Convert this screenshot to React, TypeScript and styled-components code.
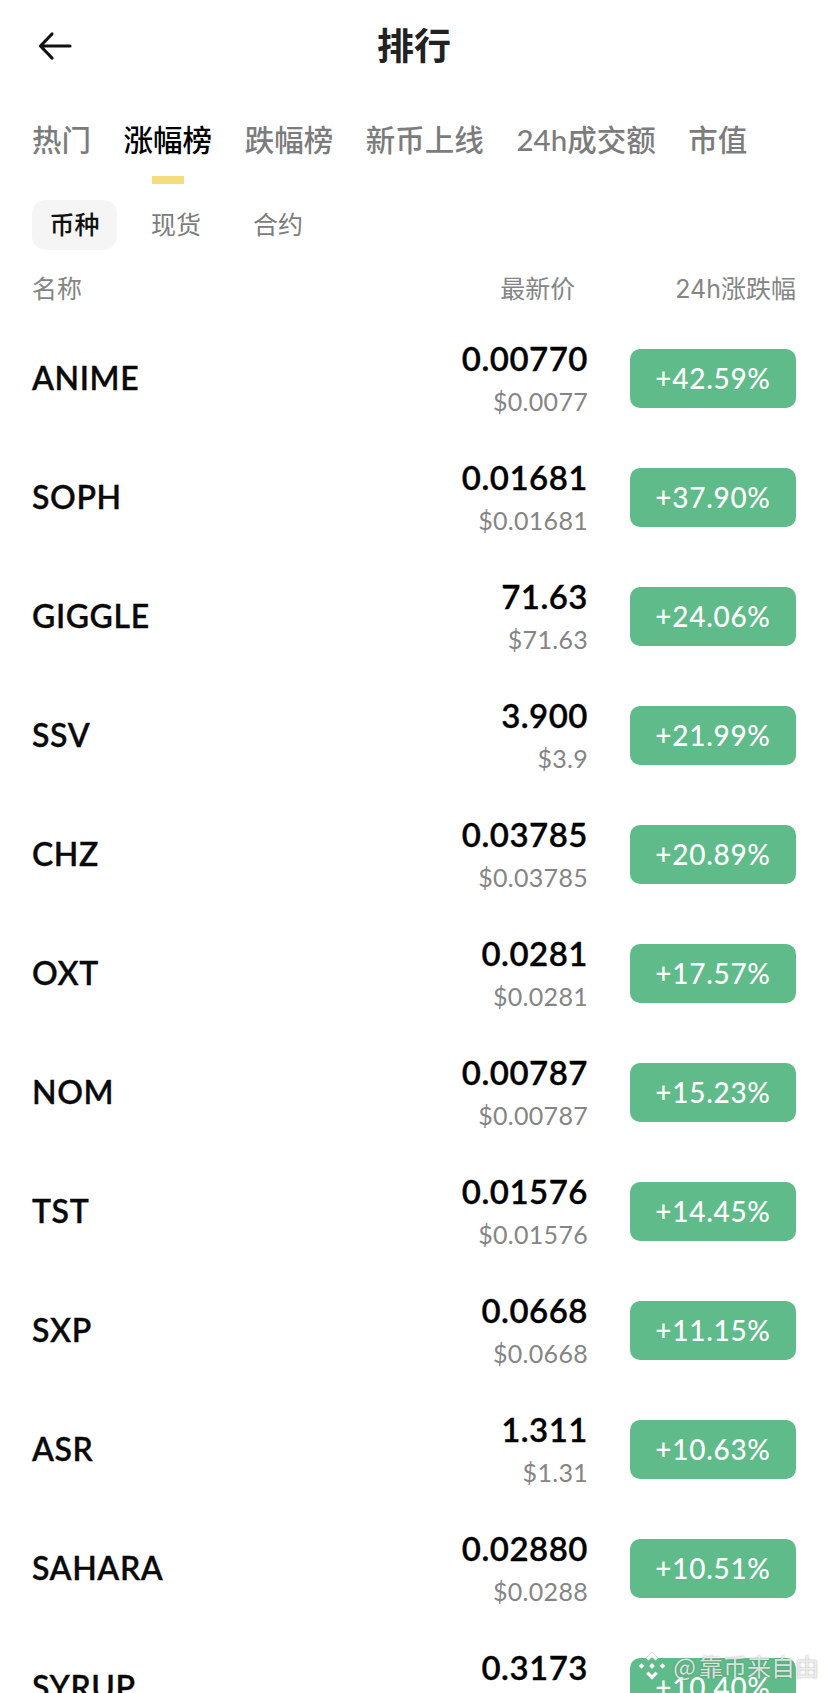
import React from "react";
import styled, { createGlobalStyle } from "styled-components";

const GlobalStyle = createGlobalStyle`
	html, body {
		margin: 0;
		padding: 0;
		background: #ffffff;
	}
	body {
		font-family: "Lato", "Noto Sans CJK SC", sans-serif;
	}
`;

const Page = styled.div`
	position: relative;
	width: 828px;
	height: 1693px;
	overflow: hidden;
	background: #ffffff;
`;

const Header = styled.header`
	height: 92px;
	display: flex;
	align-items: center;
	justify-content: center;
	position: relative;
`;

const BackButton = styled.button`
	position: absolute;
	left: 37px;
	top: 30px;
	width: 36px;
	height: 32px;
	padding: 0;
	border: none;
	background: none;
	display: flex;
`;

const Title = styled.h1`
	margin: -4px 0 0;
	font-family: "Noto Sans CJK SC", sans-serif;
	font-size: 37px;
	font-weight: 700;
	line-height: 92px;
	color: #222222;
`;

const Tabs = styled.nav`
	display: flex;
	height: 92px;
	padding: 26px 0 0 32px;
	box-sizing: border-box;
	gap: 32.6px;
`;

const Tab = styled.div<{ $active?: boolean }>`
	position: relative;
	font-family: "Lato", "Noto Sans CJK SC", sans-serif;
	font-size: 29.5px;
	line-height: 44px;
	height: 44px;
	font-weight: 500;
	white-space: nowrap;
	color: ${(p) => (p.$active ? "#000000" : "#7c7c7c")};

	${(p) =>
		p.$active &&
		`&::after {
			content: "";
			position: absolute;
			left: 28px;
			top: 58px;
			width: 32px;
			height: 8px;
			background: #f3dd7c;
		}`}
`;

const SubTabs = styled.div`
	display: flex;
	align-items: center;
	height: 50px;
	padding-left: 32px;
	margin-top: 16px;
`;

const SubTab = styled.div<{ $active?: boolean }>`
	width: ${(p) => (p.$active ? "85px" : "auto")};
	height: 50px;
	margin-right: ${(p) => (p.$active ? "34px" : "52px")};
	padding-bottom: 4px;
	box-sizing: border-box;
	display: flex;
	align-items: center;
	justify-content: center;
	border-radius: 14px;
	font-family: "Noto Sans CJK SC", sans-serif;
	font-size: 25px;
	font-weight: ${(p) => (p.$active ? 500 : 400)};
	color: ${(p) => (p.$active ? "#111111" : "#7c7c7c")};
	background: ${(p) => (p.$active ? "#f5f5f5" : "transparent")};
`;

const ColumnHead = styled.div`
	display: flex;
	justify-content: space-between;
	align-items: center;
	height: 38px;
	margin-top: 18px;
	padding: 0 32px;
	font-family: "Inter", "Noto Sans CJK SC", sans-serif;
	font-size: 25px;
	color: #858585;
`;

const HeadRight = styled.div`
	display: flex;
	gap: 100px;
`;

const List = styled.div`
	margin-top: 12px;
`;

const Row = styled.div`
	display: flex;
	align-items: center;
	height: 119px;
	padding: 0 32px;
`;

const Symbol = styled.div`
	flex: 1;
	font-size: 32px;
	font-weight: 600;
	letter-spacing: 0.6px;
	color: #0a0a0a;
	-webkit-text-stroke: 0.3px #0a0a0a;
`;

const Prices = styled.div`
	display: flex;
	flex-direction: column;
	align-items: flex-end;
	margin-right: 42px;
`;

const Price = styled.div`
	margin-top: 1px;
	font-size: 33px;
	line-height: 40px;
	font-weight: 600;
	letter-spacing: 0.5px;
	color: #000000;
	-webkit-text-stroke: 0.3px #000000;
`;

const Fiat = styled.div`
	margin-top: 6px;
	font-size: 25px;
	line-height: 34px;
	letter-spacing: 0.3px;
	color: #858585;
`;

const Change = styled.div`
	width: 166px;
	height: 59px;
	margin-top: 2px;
	padding-bottom: 2px;
	box-sizing: border-box;
	display: flex;
	align-items: center;
	justify-content: center;
	border-radius: 10px;
	background: #5fbb89;
	color: #ffffff;
	font-size: 28px;
	font-weight: 500;
	letter-spacing: 0.7px;
`;

const Watermark = styled.div`
	position: absolute;
	right: 9px;
	top: 1648px;
	display: flex;
	align-items: center;
	gap: 3px;
	font-family: "Noto Sans CJK SC", sans-serif;
	font-size: 24px;
	color: rgba(255, 255, 255, 0.75);
	text-shadow: 0 0 2px rgba(90, 90, 90, 0.6);
	white-space: nowrap;
`;

const WatermarkLogo = styled.svg`
	margin-right: 3px;
`;

const rows = [
	["ANIME", "0.00770", "$0.0077", "+42.59%"],
	["SOPH", "0.01681", "$0.01681", "+37.90%"],
	["GIGGLE", "71.63", "$71.63", "+24.06%"],
	["SSV", "3.900", "$3.9", "+21.99%"],
	["CHZ", "0.03785", "$0.03785", "+20.89%"],
	["OXT", "0.0281", "$0.0281", "+17.57%"],
	["NOM", "0.00787", "$0.00787", "+15.23%"],
	["TST", "0.01576", "$0.01576", "+14.45%"],
	["SXP", "0.0668", "$0.0668", "+11.15%"],
	["ASR", "1.311", "$1.31", "+10.63%"],
	["SAHARA", "0.02880", "$0.0288", "+10.51%"],
	["SYRUP", "0.3173", "$0.3173", "+10.40%"],
];

const tabs = ["热门", "涨幅榜", "跌幅榜", "新币上线", "24h成交额", "市值"];

const App = () => {
	return (
		<Page>
			<GlobalStyle />
			<Header>
				<BackButton aria-label="back">
					<svg width="36" height="32" viewBox="0 0 36 32" fill="none">
						<path
							d="M33 16H4M15 4L3.5 16L15 28"
							stroke="#111"
							strokeWidth="3.2"
							strokeLinecap="round"
							strokeLinejoin="round"
						/>
					</svg>
				</BackButton>
				<Title>排行</Title>
			</Header>
			<Tabs>
				{tabs.map((t) => (
					<Tab key={t} $active={t === "涨幅榜"}>
						{t}
					</Tab>
				))}
			</Tabs>
			<SubTabs>
				<SubTab $active>币种</SubTab>
				<SubTab>现货</SubTab>
				<SubTab>合约</SubTab>
			</SubTabs>
			<ColumnHead>
				<span>名称</span>
				<HeadRight>
					<span>最新价</span>
					<span>24h涨跌幅</span>
				</HeadRight>
			</ColumnHead>
			<List>
				{rows.map(([name, price, fiat, change]) => (
					<Row key={name}>
						<Symbol>{name}</Symbol>
						<Prices>
							<Price>{price}</Price>
							<Fiat>{fiat}</Fiat>
						</Prices>
						<Change>{change}</Change>
					</Row>
				))}
			</List>
			<Watermark>
				<WatermarkLogo
					width="30"
					height="30"
					viewBox="0 0 30 30"
					fill="rgba(255,255,255,0.92)"
					stroke="rgba(100,100,100,0.45)"
					strokeWidth="0.5"
				>
					<path d="M15 1l6.2 6.2-2.6 2.6L15 6.2l-3.6 3.6-2.6-2.6z" />
					<path d="M4.5 12l3 3-3 3-3-3z" />
					<path d="M25.5 12l3 3-3 3-3-3z" />
					<path d="M15 11.8l3.2 3.2-3.2 3.2-3.2-3.2z" />
					<path d="M15 29l-6.2-6.2 2.6-2.6 3.6 3.6 3.6-3.6 2.6 2.6z" />
				</WatermarkLogo>
				<span>@</span>
				<span>靠币来自由</span>
			</Watermark>
		</Page>
	);
};

export default App;
